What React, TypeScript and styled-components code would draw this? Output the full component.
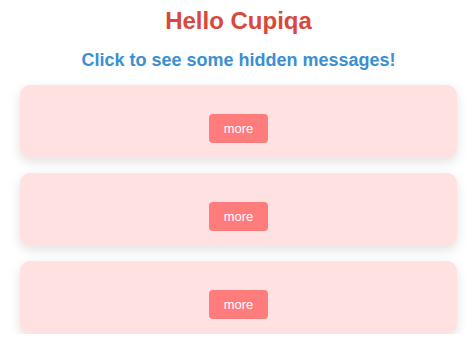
import styled, { createGlobalStyle } from "styled-components";

const Global = createGlobalStyle`
  body {
    margin: 0;
    background: #ffffff;
    font-family: "Liberation Sans", Arial, sans-serif;
  }
`;

const Page = styled.div`
  display: flex;
  flex-direction: column;
  align-items: center;
  padding: 0 17px 0 20px;
`;

const Title = styled.h1`
  margin: 7px 0 0;
  font-size: 24px;
  line-height: 28px;
  font-weight: bold;
  color: #d9483b;
`;

const Subtitle = styled.h2`
  margin: 13px 0 0;
  font-size: 18px;
  line-height: 24px;
  font-weight: bold;
  color: #3a8fd2;
`;

const List = styled.div`
  align-self: stretch;
  display: flex;
  flex-direction: column;
  gap: 15px;
  margin-top: 13px;
`;

const Card = styled.div`
  display: flex;
  justify-content: center;
  padding: 29px 0 15px;
  background: #ffe1e2;
  border-radius: 10px;
  box-shadow: 0 4px 12px rgba(0, 0, 0, 0.12);
`;

const MoreButton = styled.button`
  width: 59px;
  height: 29px;
  border: none;
  border-radius: 4px;
  background: #ff7c7c;
  color: #ffffff;
  font-family: "Liberation Sans", Arial, sans-serif;
  font-size: 13px;
  cursor: pointer;
`;

export default function App() {
  return (
    <>
      <Global />
      <Page>
        <Title>Hello Cupiqa</Title>
        <Subtitle>Click to see some hidden messages!</Subtitle>
        <List>
          {[0, 1, 2].map((i) => (
            <Card key={i}>
              <MoreButton>more</MoreButton>
            </Card>
          ))}
        </List>
      </Page>
    </>
  );
}
